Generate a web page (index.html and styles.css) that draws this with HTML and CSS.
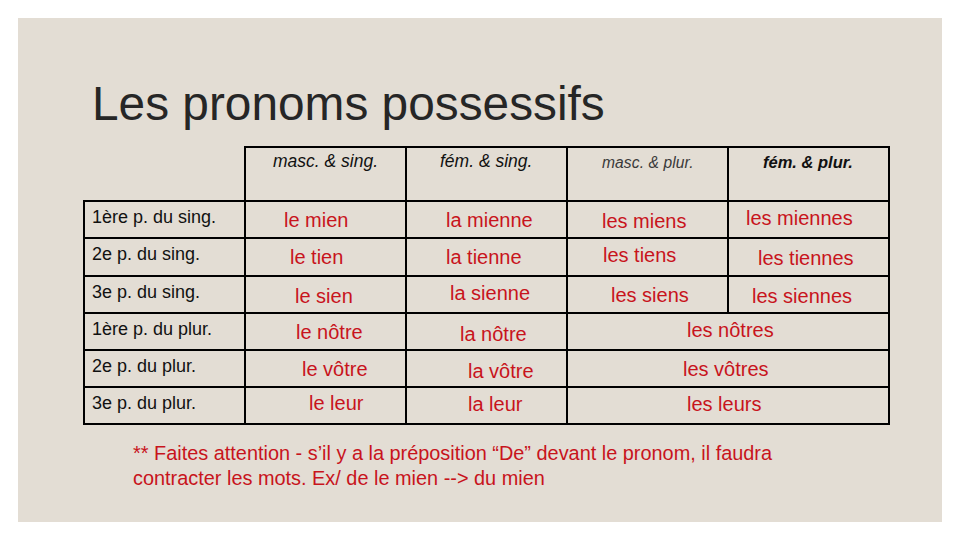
FILE: index.html
```html
<!DOCTYPE html>
<html lang="fr">
<head>
<meta charset="utf-8">
<title>Les pronoms possessifs</title>
<link rel="stylesheet" href="styles.css">
</head>
<body>
<div class="slide">
  <h1 class="title">Les pronoms possessifs</h1>
  <div class="grid">
    <div class="cell corner"></div>
    <div class="cell head h-ms">masc. &amp; sing.</div>
    <div class="cell head h-fs">fém. &amp; sing.</div>
    <div class="cell head h-mp">masc. &amp; plur.</div>
    <div class="cell head h-fp">fém. &amp; plur.</div>

    <div class="cell label">1ère p. du sing.</div>
    <div class="cell red p38">le mien</div>
    <div class="cell red p39">la mienne</div>
    <div class="cell red p34 low1">les miens</div>
    <div class="cell red p17 up1">les miennes</div>

    <div class="cell label">2e p. du sing.</div>
    <div class="cell red p44">le tien</div>
    <div class="cell red p39">la tienne</div>
    <div class="cell red p35 up1">les tiens</div>
    <div class="cell red p29 low1">les tiennes</div>

    <div class="cell label">3e p. du sing.</div>
    <div class="cell red p49 low1">le sien</div>
    <div class="cell red p43 up1">la sienne</div>
    <div class="cell red p43">les siens</div>
    <div class="cell red p23 low1">les siennes</div>

    <div class="cell label">1ère p. du plur.</div>
    <div class="cell red p50">le nôtre</div>
    <div class="cell red p53 low2">la nôtre</div>
    <div class="cell red wide p119 up1">les nôtres</div>

    <div class="cell label">2e p. du plur.</div>
    <div class="cell red p56">le vôtre</div>
    <div class="cell red p61 low2">la vôtre</div>
    <div class="cell red wide p115">les vôtres</div>

    <div class="cell label">3e p. du plur.</div>
    <div class="cell red p63 up2">le leur</div>
    <div class="cell red p61 up1">la leur</div>
    <div class="cell red wide p119 up1">les leurs</div>
  </div>
  <p class="note">** Faites attention - s’il y a la préposition “De” devant le pronom, il faudra<br>contracter les mots. Ex/ de le mien --&gt; du mien</p>
</div>
</body>
</html>
```

FILE: styles.css
```css
* { box-sizing: border-box; }

html, body {
  margin: 0;
  padding: 0;
  background: #ffffff;
}

body {
  font-family: "Liberation Sans", Arial, sans-serif;
}

.slide {
  margin: 18px;
  width: 924px;
  height: 504px;
  background: #e3ddd4;
  padding: 62px 0 0 65px;
  overflow: hidden;
}

.title {
  margin: 0 0 0 9px;
  font-weight: normal;
  font-size: 47.8px;
  line-height: 48px;
  color: #262626;
}

.grid {
  margin-top: 18px;
  display: grid;
  grid-template-columns: repeat(5, 159px);
  grid-template-rows: 52px 35px 36px 35px 35px 35px 35px;
  gap: 2px;
  padding: 2px;
  background: #000000;
  width: 807px;
}

.cell {
  background: #e3ddd4;
  white-space: nowrap;
}

.corner {
  margin: -2px 0 0 -2px;
}

.head {
  color: #111111;
  font-style: italic;
  font-size: 17.5px;
  line-height: 20px;
  padding-top: 3px;
}

.h-ms { padding-left: 27px; }
.h-fs { padding-left: 33px; }
.h-mp {
  padding-left: 34px;
  padding-top: 5px;
  font-size: 15.6px;
  color: #3a3a3a;
  letter-spacing: 0.1px;
}
.h-fp {
  padding-left: 34px;
  padding-top: 4px;
  font-size: 16.5px;
  font-weight: bold;
}

.label {
  color: #111111;
  font-size: 18px;
  line-height: 21px;
  padding: 4.5px 0 0 7px;
}

.red {
  color: #c8141c;
  font-size: 20px;
  line-height: 23px;
  padding-top: 6.5px;
}

.wide { grid-column: span 2; }

.low1 { padding-top: 8px; }
.low2 { padding-top: 9px; }
.up1 { padding-top: 5px; }
.up2 { padding-top: 4px; }

.p17 { padding-left: 17px; }
.p23 { padding-left: 23px; }
.p29 { padding-left: 29px; }
.p34 { padding-left: 34px; }
.p35 { padding-left: 35px; }
.p38 { padding-left: 38px; }
.p39 { padding-left: 39px; }
.p43 { padding-left: 43px; }
.p44 { padding-left: 44px; }
.p49 { padding-left: 49px; }
.p50 { padding-left: 50px; }
.p53 { padding-left: 53px; }
.p56 { padding-left: 56px; }
.p61 { padding-left: 61px; }
.p63 { padding-left: 63px; }
.p115 { padding-left: 115px; }
.p119 { padding-left: 119px; }

.note {
  margin: 16px 0 0 50px;
  color: #c8141c;
  font-size: 19.9px;
  line-height: 25px;
}
```
